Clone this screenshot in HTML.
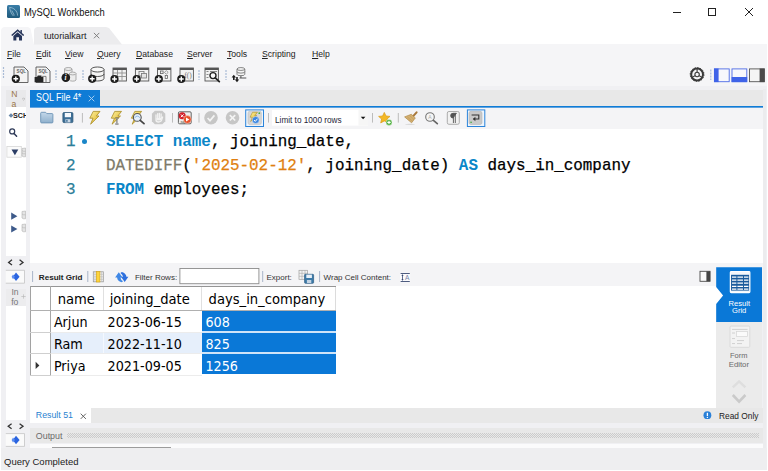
<!DOCTYPE html>
<html>
<head>
<meta charset="utf-8">
<title>MySQL Workbench</title>
<style>
html,body{margin:0;padding:0;}
body{width:768px;height:471px;overflow:hidden;background:#fff;position:relative;font-family:"Liberation Sans",sans-serif;color:#222;}
.a{position:absolute;}
.t{position:absolute;white-space:nowrap;line-height:1;transform-origin:0 0;}
u{text-decoration:underline;text-underline-offset:1px;text-decoration-thickness:1px;}
.code{font-family:"Liberation Mono","DejaVu Sans Mono",monospace;font-size:15.9px;color:#000;-webkit-text-stroke:0.25px currentColor;}
.code .kw{-webkit-text-stroke:0;}
.kw{color:#0a86c8;font-weight:bold;}
.fn{color:#7d7a6a;}
.st{color:#e07f10;}
.ln{color:#2d7e99;}
.grid{font-family:"DejaVu Sans Condensed","DejaVu Sans","Liberation Sans",sans-serif;font-size:14.2px;color:#000;}
.gh{font-size:14.6px;}
.m{font-size:9.2px;color:#222;top:49.5px;transform:scaleX(.94);}
.sep{position:absolute;width:1px;background:#b8bcc8;}
.dsep{position:absolute;width:1px;height:10px;background:repeating-linear-gradient(#b9c8dc 0 1px,transparent 1px 2px);}
.tb{font-size:8px;color:#333;top:274.3px;}
</style>
</head>
<body>
<!-- window chrome background -->
<div class="a" style="left:1px;top:44px;width:766px;height:42px;background:#f5f5f7;"></div>
<div class="a" style="left:1px;top:86px;width:766px;height:362px;background:#f0f0f3;"></div>
<div class="a" style="left:30px;top:108px;width:732.5px;height:21px;background:#f4f4f6;"></div>
<div class="a" style="left:30px;top:263px;width:732.5px;height:23px;background:#f4f4f6;"></div>
<div class="a" style="left:762.5px;top:89px;width:3.5px;height:359px;background:#ececee;"></div>
<div class="a" style="left:1px;top:448px;width:766px;height:21.5px;background:#eeeef0;"></div>

<!-- title bar -->
<svg class="a" style="left:7px;top:5px" width="13" height="13" viewBox="0 0 13 13"><defs><linearGradient id="lg" x1="0" y1="0" x2="0" y2="1"><stop offset="0" stop-color="#3a7ea8"/><stop offset="1" stop-color="#1f5a7c"/></linearGradient></defs><rect width="13" height="13" rx="1.5" fill="url(#lg)"/><path d="M2.6 2.4 C6.5 2.6 10.4 5.5 10.6 10.6 M2.6 2.4 C3 6 4.6 9 6.4 11 M4.8 5.6 C5.6 7 6.4 8.6 7.4 10.4" stroke="#c4dcea" stroke-width="0.7" fill="none" opacity=".85"/></svg>
<div class="t" style="left:24px;top:7.8px;font-size:10.2px;color:#111;transform:scaleX(.92);">MySQL Workbench</div>
<div class="a" style="left:673px;top:12px;width:8px;height:1px;background:#222;"></div>
<div class="a" style="left:708px;top:8px;width:6px;height:6px;border:1px solid #222;"></div>
<svg class="a" style="left:744px;top:7px" width="10" height="10" viewBox="0 0 10 10"><path d="M1 1 L9 9 M9 1 L1 9" stroke="#222" stroke-width="1" fill="none"/></svg>

<!-- tab row -->
<div class="a" style="left:1px;top:27px;width:33px;height:18px;background:#f5f5f7;clip-path:polygon(0 3px,1px 1px,3px 0,27px 0,29.5px 1.5px,33px 18px,0 18px);"></div>
<div class="a" style="left:34px;top:27px;width:88px;height:17.6px;background:#ececee;clip-path:polygon(0 3px,1px 1px,3px 0,72px 0,75px 1px,88px 17.6px,0 17.6px);"></div>
<svg class="a" style="left:11px;top:28.8px" width="13.4" height="12" viewBox="0 0 13 12" preserveAspectRatio="none"><path d="M6.5 0.3 L0.2 6 L1.2 7 L6.5 2.2 L11.8 7 L12.8 6 L10.6 4 L10.6 1 L9.2 1 L9.2 2.7 Z" fill="#26355a"/><path d="M2.3 7 L6.5 3.3 L10.7 7 L10.7 11.6 L7.8 11.6 L7.8 8.2 L5.2 8.2 L5.2 11.6 L2.3 11.6 Z" fill="#26355a"/></svg>
<div class="t" style="left:44px;top:31.7px;font-size:9.1px;color:#222;">tutorialkart</div>
<svg class="a" style="left:93.3px;top:32.4px" width="7.2" height="7.2" viewBox="0 0 8 8"><path d="M1 1 L7 7 M7 1 L1 7" stroke="#777" stroke-width="1" fill="none"/></svg>

<!-- menu row -->
<div class="t m" style="left:7px;"><u>F</u>ile</div>
<div class="t m" style="left:36px;"><u>E</u>dit</div>
<div class="t m" style="left:65px;"><u>V</u>iew</div>
<div class="t m" style="left:97px;"><u>Q</u>uery</div>
<div class="t m" style="left:136px;"><u>D</u>atabase</div>
<div class="t m" style="left:187px;"><u>S</u>erver</div>
<div class="t m" style="left:227px;"><u>T</u>ools</div>
<div class="t m" style="left:262px;"><u>S</u>cripting</div>
<div class="t m" style="left:312px;"><u>H</u>elp</div>

<!-- main toolbar -->
<svg class="a" style="left:0;top:60px" width="768" height="28" viewBox="0 60 768 28">
<defs>
<g id="plus"><circle r="4.1" fill="#1c1c1c"/><path d="M-2.4 0H2.4M0 -2.4V2.4" stroke="#fff" stroke-width="1.4"/></g>
<g id="tblframe"><rect x="0" y="0" width="13.4" height="13" fill="#f2f2f2" stroke="#555" stroke-width="0.9"/><rect x="0" y="0" width="13.4" height="2" fill="#555"/></g>
</defs>
<path d="M3.5 67 V78" stroke="#a9bbd6" stroke-width="1.2" stroke-dasharray="2 1"/>
<!-- new sql -->
<path d="M14 67 H24 L28 71 V82.5 H14 Z" fill="#f3f3f3" stroke="#555" stroke-width="0.9"/>
<text x="16.6" y="72.6" font-family="Liberation Sans, sans-serif" font-size="4.6" font-weight="bold" fill="#666">SQL</text>
<use href="#plus" x="15.8" y="78.8"/>
<!-- open sql -->
<path d="M36 67 H46 L50 71 V82.5 H36 Z" fill="#f3f3f3" stroke="#555" stroke-width="0.9"/>
<text x="38.4" y="72.6" font-family="Liberation Sans, sans-serif" font-size="4.6" font-weight="bold" fill="#666">SQL</text>
<path d="M34.6 77 H37 L37.8 75.4 H41.4 V77 H43.4 V82.2 H34.6 Z" fill="#262626"/>
<path d="M41.4 76.4 H46 V82.4" fill="none" stroke="#666" stroke-width="0.8"/>
<!-- sep -->
<path d="M56 70 V80" stroke="#a9bbd6" stroke-width="1.2" stroke-dasharray="2 1"/>
<!-- info db -->
<g fill="#ececec" stroke="#9a9a9a" stroke-width="0.8">
<path d="M64.5 69 V77 A3.8 1.5 0 0 0 72 77 V69 Z"/><ellipse cx="68.25" cy="69" rx="3.75" ry="1.5"/>
<path d="M69.5 73.5 V80 A3.3 1.4 0 0 0 76 80 V73.5 Z"/><ellipse cx="72.75" cy="73.5" rx="3.25" ry="1.4"/>
</g>
<circle cx="65.8" cy="77.6" r="4.3" fill="#1c1c1c"/>
<text x="64.5" y="80.4" font-family="Liberation Serif, serif" font-size="7.5" font-weight="bold" font-style="italic" fill="#fff">i</text>
<path d="M83 70 V80" stroke="#a9bbd6" stroke-width="1.2" stroke-dasharray="2 1"/>
<!-- new schema -->
<path d="M91 69.5 V78.5 A6.5 2.5 0 0 0 104 78.5 V69.5" fill="#f3f3f3" stroke="#444" stroke-width="0.9"/>
<ellipse cx="97.5" cy="69.5" rx="6.5" ry="2.5" fill="#f8f8f8" stroke="#444" stroke-width="0.9"/>
<path d="M91 74 A6.5 2.5 0 0 0 104 74" fill="none" stroke="#444" stroke-width="0.9"/>
<use href="#plus" x="92.2" y="78.8"/>
<!-- new table -->
<use href="#tblframe" x="113" y="68"/>
<path d="M117.5 70 V80.5 M122 70 V80.5 M113 73 H126.4 M113 76.5 H126.4" stroke="#909090" stroke-width="0.9" fill="none"/>
<use href="#plus" x="114.5" y="79"/>
<!-- new view -->
<use href="#tblframe" x="135.4" y="68"/>
<rect x="139" y="71.5" width="5" height="4.5" fill="none" stroke="#777" stroke-width="0.8"/>
<rect x="141.5" y="73.5" width="5" height="4.5" fill="#e4e4e4" stroke="#777" stroke-width="0.8"/>
<use href="#plus" x="136.7" y="79"/>
<!-- new routine -->
<use href="#tblframe" x="157.5" y="68"/>
<rect x="160.5" y="71" width="2.6" height="2.6" fill="none" stroke="#666" stroke-width="0.8"/>
<path d="M166.3 70.6 L168.2 72.4 L166.3 74.2 L164.4 72.4 Z" fill="none" stroke="#777" stroke-width="0.7"/>
<rect x="165.2" y="75.5" width="2.4" height="3" fill="none" stroke="#666" stroke-width="0.8"/>
<use href="#plus" x="158.8" y="79"/>
<!-- new function -->
<use href="#tblframe" x="180" y="68"/>
<text x="184.3" y="78.2" font-family="Liberation Serif, serif" font-size="7.5" fill="#777">f()</text>
<use href="#plus" x="181.3" y="79"/>
<path d="M199 70 V80" stroke="#a9bbd6" stroke-width="1.2" stroke-dasharray="2 1"/>
<!-- search table -->
<use href="#tblframe" x="205" y="68"/>
<path d="M206.5 71.5 H208.5 M206.5 74.5 H208.5 M206.5 77.5 H208.5 M210 71.5 H217" stroke="#888" stroke-width="1"/>
<circle cx="213" cy="75.6" r="3" fill="#fafafa" stroke="#222" stroke-width="1.4"/>
<path d="M215.3 77.9 L219.3 81.6" stroke="#222" stroke-width="1.8" stroke-linecap="round"/>
<path d="M226 70 V80" stroke="#a9bbd6" stroke-width="1.2" stroke-dasharray="2 1"/>
<!-- reconnect -->
<path d="M237 69 V74.3 A3.9 1.4 0 0 0 244.8 74.3 V69" fill="#f5f5f5" stroke="#666" stroke-width="0.8"/>
<ellipse cx="240.9" cy="69" rx="3.9" ry="1.4" fill="#fafafa" stroke="#666" stroke-width="0.8"/>
<path d="M237 71.7 A3.9 1.4 0 0 0 244.8 71.7" fill="none" stroke="#666" stroke-width="0.8"/>
<path d="M239.5 78 H246.3" stroke="#444" stroke-width="0.9"/>
<path d="M240.9 75.7 V78" stroke="#444" stroke-width="0.9"/>
<path d="M233.8 74.8 L236 77.5 H234.6 V80 H233 V77.5 H231.6 Z M237 82.3 L234.8 79.6 H236.2 V77.1 H237.8 V79.6 H239.2 Z" fill="#1c1c1c"/>
<!-- gear -->
<circle cx="697.1" cy="74.5" r="5.9" fill="none" stroke="#3a3a3a" stroke-width="2"/>
<circle cx="697.1" cy="74.5" r="6.9" fill="none" stroke="#3a3a3a" stroke-width="1" stroke-dasharray="1.4 1.3"/>
<circle cx="697.1" cy="74.5" r="2.2" fill="none" stroke="#3a3a3a" stroke-width="1.1"/>
<path d="M697.1 72.3 V69 M695.2 75.6 L692.3 77.3 M699 75.6 L701.9 77.3" stroke="#3a3a3a" stroke-width="1.1"/>
<path d="M710.8 69.6 V80" stroke="#a9bbd6" stroke-width="1.2" stroke-dasharray="2 1"/>
<!-- panel toggles -->
<rect x="714.4" y="68.9" width="14.8" height="12.8" fill="#f8f8fc" stroke="#4c6ae6" stroke-width="0.9"/>
<rect x="714" y="68.5" width="4.6" height="13.6" fill="#3f63e8"/>
<rect x="732" y="68.9" width="14.8" height="12.8" fill="#f8f8fc" stroke="#4c6ae6" stroke-width="0.9"/>
<rect x="731.6" y="77" width="15.6" height="5.1" fill="#3f63e8"/>
<rect x="749.5" y="68.9" width="14.8" height="12.8" fill="#f4f4f4" stroke="#555" stroke-width="0.9"/>
<rect x="759.6" y="68.5" width="5.1" height="13.6" fill="#4a4a4a"/>
</svg>


<!-- left sidebar -->
<div class="a" style="left:6px;top:90px;width:19.5px;height:17px;background:#e9e9eb;"></div>
<div class="a" style="left:6px;top:107px;width:19.5px;height:149px;background:#fff;"></div>
<div class="a" style="left:6px;top:90px;width:19.5px;height:17.4px;overflow:hidden;">
<div class="t" style="left:5.3px;top:0.2px;font-size:8.6px;color:#9a7648;">N</div>
<div class="t" style="left:5.6px;top:10.4px;font-size:8.6px;color:#9a7648;">a</div>
</div>
<svg class="a" style="left:0;top:88px" width="30" height="360" viewBox="0 88 30 360">
<path d="M23.6 97.8 L24.8 99 L23.6 100.2 L22.4 99 Z" fill="none" stroke="#aaa" stroke-width="0.6"/>
<path d="M8.6 115.5 L11 113.2 L13.4 115.5 L11 117.8 Z" fill="#6a88a8"/>
<circle cx="12.2" cy="131.4" r="2.5" fill="none" stroke="#2e3a58" stroke-width="1.2"/>
<path d="M14 133.4 L16.6 136.2" stroke="#2e3a58" stroke-width="1.5" stroke-linecap="round"/>
<rect x="6.9" y="146.4" width="14.4" height="10.8" fill="#fbfbfb" stroke="#d6d6d6" stroke-width="0.8"/>
<path d="M11.5 149.6 H18.3 L14.9 155.2 Z" fill="#2c3e66"/>
<g fill="#e4e4e4" stroke="#b4b4b4" stroke-width="0.6">
<path d="M22 148.5 V156 A3 1.2 0 0 0 25.5 156.8 V148 Z"/>
<path d="M22 150.5 A3 1.2 0 0 0 25.5 151.3 M22 153 A3 1.2 0 0 0 25.5 153.8" fill="none"/>
<path d="M22 211.5 V218 A3 1.2 0 0 0 25.5 218.8 V211 Z"/>
<path d="M22 214 A3 1.2 0 0 0 25.5 214.8" fill="none"/>
<path d="M22 224.5 V231 A3 1.2 0 0 0 25.5 231.8 V224 Z"/>
<path d="M22 227 A3 1.2 0 0 0 25.5 227.8" fill="none"/>
</g>
<path d="M11.2 212.6 L17.4 216.2 L11.2 219.8 Z M11.2 225.4 L17.4 229 L11.2 232.6 Z" fill="#3d5a8a"/>
<!-- nav arrows and button 1 -->
<path d="M12 259.8 L8.6 262.4 L12 265 M19.6 259.8 L23 262.4 L19.6 265" stroke="#333" stroke-width="1.3" fill="none"/>
<path d="M5.8 270.3 H24.5 V283.2 H5.8" fill="#fafafa" stroke="#c4c4c4" stroke-width="0.8"/>
<path d="M16 272.6 L19.6 276.8 L16 281 L12.8 276.8 Z" fill="#2a64e0"/>
<path d="M13 274.4 L15 276.8 L13 279.2 L11.6 276.8 Z" fill="#5a8cf0"/>
<!-- nav arrows and button 2 -->
<path d="M11.6 423.8 L8.2 426.3 L11.6 428.8 M19.6 423.8 L23 426.3 L19.6 428.8" stroke="#333" stroke-width="1.3" fill="none"/>
<path d="M5.8 433.6 H24.5 V446.4 H5.8" fill="#fafafa" stroke="#c4c4c4" stroke-width="0.8"/>
<path d="M16 435.8 L19.6 440 L16 444.2 L12.8 440 Z" fill="#2a64e0"/>
<path d="M13 437.6 L15 440 L13 442.4 L11.6 440 Z" fill="#5a8cf0"/>
</svg>
<div class="a" style="left:6px;top:110px;width:19.5px;height:12px;overflow:hidden;"><div class="t" style="left:6.8px;top:2.4px;font-size:7.8px;font-weight:bold;color:#222;transform:scaleX(.92);">SCHEMAS</div></div>
<!-- info -->
<div class="a" style="left:6px;top:289px;width:19.5px;height:16.6px;background:#ececee;"></div>
<div class="a" style="left:6px;top:305.6px;width:19.5px;height:114.4px;background:#fff;"></div>
<div class="t" style="left:11.4px;top:288.2px;font-size:8.6px;color:#777;">In</div>
<div class="t" style="left:11.2px;top:298.2px;font-size:8.6px;color:#777;">fo</div>
<svg class="a" style="left:21px;top:294px" width="5" height="5" viewBox="0 0 5 5"><path d="M2.5 0.3 V4.7 M0.3 2.5 H4.7" stroke="#b4b4b4" stroke-width="0.6"/></svg>

<!-- SQL tab row -->
<div class="a" style="left:30px;top:90.4px;width:732.5px;height:15.6px;background:#e8e8e8;"></div>
<div class="a" style="left:30px;top:90.4px;width:70px;height:15.6px;background:#0f7cd6;"></div>
<div class="a" style="left:30px;top:106px;width:732.5px;height:1px;background:#0f7cd6;"></div>
<div class="a" style="left:30px;top:107px;width:732.5px;height:1px;background:#5fa3e0;"></div>
<div class="t" style="left:36px;top:92.8px;font-size:10.1px;color:#fff;transform:scaleX(.885);">SQL File 4*</div>
<svg class="a" style="left:88px;top:95px" width="7" height="7" viewBox="0 0 7 7"><path d="M0.7 0.7 L6.3 6.3 M6.3 0.7 L0.7 6.3" stroke="#a4cdf0" stroke-width="1" fill="none"/></svg>

<!-- editor toolbar -->
<svg class="a" style="left:0;top:107px" width="768" height="23" viewBox="0 107 768 23">
<defs>
<linearGradient id="gy" x1="0" y1="0" x2="1" y2="1"><stop offset="0" stop-color="#fff4a0"/><stop offset="1" stop-color="#d9a91a"/></linearGradient>
<linearGradient id="gf" x1="0" y1="0" x2="0" y2="1"><stop offset="0" stop-color="#c4d8ea"/><stop offset="1" stop-color="#8fb0cc"/></linearGradient>
<path id="bolt" d="M4.2 0.4 L11 0.4 L7.4 5 L10 5 L1.6 13.2 L4 7.2 L0.8 7.2 Z" fill="url(#gy)" stroke="#a88c22" stroke-width="0.8" stroke-linejoin="round"/>
</defs>
<!-- folder -->
<path d="M40.7 113.2 Q40.7 112.3 41.6 112.3 H45.6 L46.8 113.6 H52 Q52.9 113.6 52.9 114.5 V122 Q52.9 122.9 52 122.9 H41.6 Q40.7 122.9 40.7 122 Z" fill="url(#gf)" stroke="#6c93b5" stroke-width="0.9"/>
<!-- save -->
<rect x="62.9" y="112.6" width="10" height="10" rx="1" fill="#3c6e96" stroke="#2d5878" stroke-width="0.8"/>
<rect x="64.8" y="113" width="6.2" height="4.2" fill="#f4f8fc"/>
<rect x="65.4" y="119.2" width="5" height="3.2" fill="#c9d8e6"/>
<rect x="66.2" y="119.8" width="1.4" height="2" fill="#3c6e96"/>
<path d="M82.4 113 V122.6" stroke="#bcbcbc" stroke-width="1"/>
<!-- bolts -->
<use href="#bolt" x="89" y="111"/>
<use href="#bolt" x="110.5" y="111"/>
<path d="M115.3 118 H118.5 M116.9 118 V124 M115.3 124 H118.5" stroke="#222" stroke-width="0.9" fill="none"/>
<path d="M115.6 118.2 H118.2 M116.9 118 V124 M115.6 123.8 H118.2" stroke="#fff" stroke-width="0.4" fill="none"/>
<use href="#bolt" x="130.6" y="111"/>
<circle cx="137.3" cy="117.4" r="3.9" fill="#e6f0fa" stroke="#555" stroke-width="1.1"/>
<path d="M135 117.8 A2.4 2.4 0 0 1 139.6 117.8" fill="none" stroke="#7fb0e0" stroke-width="0.9"/>
<path d="M140.2 120.4 L144 123.6" stroke="#444" stroke-width="1.8" stroke-linecap="round"/>
<!-- stop -->
<path d="M154.9 110.7 H162.3 L165.3 113.8 V121.2 L162.3 124.3 H154.9 L151.9 121.2 V113.8 Z" fill="#c9c9c9"/>
<path d="M156 119 V115 M157.7 118 V113.6 M159.4 118 V113.3 M161.1 118 V114 M156 117.5 V120 Q156 122 158.6 122 Q161.4 122 161.8 119.5 L162.6 117" stroke="#f2f2f2" stroke-width="1.3" fill="none" stroke-linecap="round"/>
<path d="M156.4 118 H161.4 V120.4 H156.4 Z" fill="#f2f2f2"/>
<path d="M172.5 113 V122.6" stroke="#bcbcbc" stroke-width="1"/>
<!-- stop on error -->
<rect x="178.4" y="111.8" width="12.8" height="12" rx="1.2" fill="#eeeeee" stroke="#555" stroke-width="0.9"/>
<text x="180.5" y="123" font-family="Liberation Sans, sans-serif" font-size="4" fill="#444">sql</text>
<circle cx="182.2" cy="115.8" r="3.5" fill="#d3202a"/>
<path d="M180.8 114.4 L183.6 117.2 M183.6 114.4 L180.8 117.2" stroke="#fff" stroke-width="1"/>
<circle cx="187.4" cy="119.5" r="3.9" fill="#e8502a" stroke="#f6e0d8" stroke-width="0.5"/>
<path d="M186 117.6 L189.4 119.5 L186 121.4 Z" fill="#fff"/>
<path d="M199 113 V122.6" stroke="#bcbcbc" stroke-width="1"/>
<!-- commit / rollback -->
<circle cx="211" cy="117.8" r="6.8" fill="#c6c6c6"/>
<path d="M207.6 118 L210 120.6 L214.4 115.4" stroke="#f4f4f4" stroke-width="1.7" fill="none"/>
<circle cx="232.5" cy="117.8" r="6.8" fill="#c6c6c6"/>
<path d="M229.8 115.1 L235.2 120.5 M235.2 115.1 L229.8 120.5" stroke="#f4f4f4" stroke-width="1.7" fill="none"/>
<!-- autocommit toggle -->
<rect x="245.7" y="109.9" width="17.8" height="16.6" fill="#eef5fc" stroke="#2b84da" stroke-width="1"/>
<rect x="248" y="111.2" width="13.4" height="13.4" rx="2" fill="#d6d6d6" stroke="#bdbdbd" stroke-width="0.6"/>
<g transform="translate(249.5 112) scale(.72)"><use href="#bolt"/></g>
<circle cx="259.3" cy="113.2" r="0.9" fill="#47b044"/>
<circle cx="255.7" cy="120" r="3.5" fill="#3b86e0" stroke="#dbe8f8" stroke-width="0.5"/>
<path d="M254 120 L255.3 121.4 L257.5 118.7" stroke="#fff" stroke-width="1" fill="none"/>
<path d="M268.5 113 V122.6" stroke="#bcbcbc" stroke-width="1"/>
<!-- limit dropdown -->
<rect x="272" y="110" width="96" height="15.6" fill="#fff"/>
<rect x="358.5" y="110" width="9.5" height="15.6" fill="#f6f6f6"/>
<path d="M360.8 116.8 H365.4 L363.1 119.3 Z" fill="#111"/>
<path d="M372.5 113 V122.6" stroke="#bcbcbc" stroke-width="1"/>
<!-- star -->
<path d="M384.3 112.4 L386 116 L390 116.4 L387 119 L387.9 122.9 L384.3 120.9 L380.7 122.9 L381.6 119 L378.6 116.4 L382.6 116 Z" fill="#f4b824" stroke="#d99a14" stroke-width="0.7" stroke-linejoin="round"/>
<circle cx="389" cy="122.4" r="3" fill="#4cae3c" stroke="#e8f4e4" stroke-width="0.5"/>
<path d="M387.3 122.4 H390.7 M389 120.7 V124.1" stroke="#fff" stroke-width="1.1"/>
<path d="M398.3 113 V122.6" stroke="#bcbcbc" stroke-width="1"/>
<!-- broom -->
<path d="M416.6 112.3 L413.2 116.2" stroke="#a9793c" stroke-width="2" stroke-linecap="round"/>
<path d="M411.3 114.3 L415.3 117.9 L411.6 122.8 L404.6 116.9 Z" fill="#d4b071" stroke="#b08a48" stroke-width="0.7" stroke-linejoin="round"/>
<path d="M409.6 115.6 L413.8 119.3 M407.4 117 L412.4 121.2" stroke="#b99556" stroke-width="0.5"/>
<ellipse cx="410" cy="124.3" rx="5" ry="0.6" fill="#d8d8d8"/>
<!-- magnifier -->
<circle cx="430" cy="117" r="4.3" fill="#f6f6f6" stroke="#777" stroke-width="1.1"/>
<text x="428.3" y="119" font-family="Liberation Sans, sans-serif" font-size="5" fill="#aaa">A</text>
<path d="M433.4 120.3 L437.3 123.6" stroke="#666" stroke-width="1.7" stroke-linecap="round"/>
<!-- pilcrow -->
<rect x="447.3" y="111.5" width="12" height="12.8" rx="1.6" fill="#f1f1f1" stroke="#9a9a9a" stroke-width="0.8"/>
<path d="M453.4 113.6 V123 M455.3 113.6 V123 M456.4 113.3 H453 A2.3 2.3 0 0 0 453 118 Z" stroke="#555" stroke-width="0.9" fill="#555"/>
<!-- wrap toggle -->
<rect x="467.4" y="109.9" width="17.4" height="16.6" fill="#eef5fc" stroke="#2b84da" stroke-width="1"/>
<rect x="469" y="111.3" width="13" height="13.2" rx="2" fill="#c9c9c9" stroke="#b5b5b5" stroke-width="0.6"/>
<path d="M471.6 115 H478.8 V119 H473.6" stroke="#333" stroke-width="1.1" fill="none"/>
<path d="M475.4 116.8 L472.8 119 L475.4 121.2 Z" fill="#333"/>
<rect x="470.4" y="121.7" width="1.4" height="1.2" fill="#3aa83a"/>
</svg>
<div class="t" style="left:275.2px;top:114.6px;font-size:9.8px;color:#26263a;transform:scaleX(.838);">Limit to 1000 rows</div>


<!-- editor -->
<div class="a" style="left:30px;top:129px;width:732.5px;height:134px;background:#fff;"></div>
<div class="t code ln" style="left:66px;top:134.6px;">1</div>
<div class="a" style="left:82px;top:138.5px;width:5px;height:5px;border-radius:2.5px;background:#1a86c8;"></div>
<div class="t code" style="left:106px;top:134.6px;"><span class="kw">SELECT</span> <span class="kw">name</span>, joining_date,</div>
<div class="t code ln" style="left:66px;top:158.7px;">2</div>
<div class="t code" style="left:106px;top:158.7px;"><span class="fn">DATEDIFF</span>(<span class="st">'2025-02-12'</span>, joining_date) <span class="kw">AS</span> days_in_company</div>
<div class="t code ln" style="left:66px;top:182.8px;">3</div>
<div class="t code" style="left:106px;top:182.8px;"><span class="kw">FROM</span> employees;</div>

<!-- result toolbar -->
<svg class="a" style="left:0;top:263px" width="768" height="24" viewBox="0 263 768 24">
<path d="M32.6 271 V282" stroke="#a8b4c8" stroke-width="1"/>
<path d="M87.8 271 V282" stroke="#a8b4c8" stroke-width="1"/>
<!-- grid icon -->
<rect x="93.3" y="271.8" width="10" height="10" fill="#f4f4f4" stroke="#9a9a9a" stroke-width="0.8"/>
<path d="M93.3 274.3 H103.3 M93.3 276.8 H103.3 M93.3 279.3 H103.3 M95 271.8 V281.8 M101.6 271.8 V281.8" stroke="#b8b8b8" stroke-width="0.6"/>
<rect x="96.4" y="271.6" width="3.5" height="10.4" fill="#fdd43c" stroke="#d8a81c" stroke-width="0.7"/>
<!-- refresh -->
<path d="M118.8 272.3 L122.5 277.4 L120.5 277.4 Q120.7 280 123.1 281.3 L121.6 282.3 Q117.3 281 117.1 277.4 L115.1 277.4 Z" fill="#3f88e6"/>
<path d="M124.7 281.9 L121 276.8 L123 276.8 Q122.8 274.2 120.4 272.9 L121.9 271.9 Q126.2 273.2 126.4 276.8 L128.4 276.8 Z" fill="#2e70de"/>
<!-- filter input -->
<rect x="179.9" y="268.5" width="79" height="15.2" fill="#fff" stroke="#8c8c8c" stroke-width="0.9"/>
<path d="M262.7 271 V282" stroke="#a8b4c8" stroke-width="1"/>
<!-- export icon -->
<rect x="299" y="270.3" width="8.6" height="9" fill="#f4f4f4" stroke="#a0a0a0" stroke-width="0.7"/>
<path d="M299 273.3 H307.6 M299 276.3 H307.6 M302 270.3 V279.3 M305 270.3 V279.3" stroke="#a8a8a8" stroke-width="0.6"/>
<rect x="304.6" y="274.3" width="9" height="9" rx="0.8" fill="#3c7aa8" stroke="#2c5c84" stroke-width="0.7"/>
<rect x="306.3" y="274.6" width="5.6" height="3.4" fill="#e8f0f8"/>
<rect x="306.9" y="280" width="4.4" height="3" fill="#c4d4e4"/>
<path d="M319.6 271 V282" stroke="#a8b4c8" stroke-width="1"/>
<!-- wrap icon -->
<rect x="400" y="272.6" width="10.2" height="9.8" fill="#fbfbfd"/>
<path d="M400.6 273.5 H409.8 M400.6 281.5 H409.8" stroke="#3a4a72" stroke-width="0.9"/>
<path d="M402.5 274.6 V280.4" stroke="#3a4a72" stroke-width="0.8"/>
<path d="M401.3 276 L402.5 274.4 L403.7 276 Z M401.3 279 L402.5 280.6 L403.7 279 Z" fill="#3a4a72"/>
<text x="405" y="280.2" font-family="Liberation Sans, sans-serif" font-size="6.6" fill="#7686a8">A</text>
<!-- panel toggle -->
<rect x="700" y="271.3" width="10" height="10" fill="#fafafa" stroke="#4a4a4a" stroke-width="0.9"/>
<rect x="706.4" y="271.3" width="3.8" height="10" fill="#444"/>
</svg>
<div class="t" style="left:38.8px;top:274.2px;font-size:8.1px;font-weight:bold;color:#222;">Result Grid</div>
<div class="t tb" style="left:134.9px;">Filter Rows:</div>
<div class="t tb" style="left:266.5px;">Export:</div>
<div class="t tb" style="left:323.6px;">Wrap Cell Content:</div>


<!-- result grid -->
<div class="a" style="left:30px;top:286px;width:686.2px;height:122px;background:#fff;"></div>
<div class="a" style="left:716px;top:286px;width:8px;height:20px;background:#fff;"></div>
<div class="a" style="left:30px;top:286px;width:306px;height:1px;background:#959595;"></div>
<div class="a" style="left:30px;top:286px;width:1px;height:89px;background:#a2a2a2;"></div>
<div class="a" style="left:50px;top:286px;width:1px;height:89px;background:#a6a6a6;"></div>
<div class="a" style="left:103px;top:287px;width:1px;height:23px;background:#e0e0e0;"></div>
<div class="a" style="left:201px;top:287px;width:1px;height:23px;background:#e0e0e0;"></div>
<div class="a" style="left:335.4px;top:287px;width:1px;height:23px;background:#dcdcdc;"></div>
<div class="a" style="left:30px;top:310px;width:306px;height:1px;background:#b0b0b0;"></div>
<div class="a" style="left:30px;top:332px;width:21px;height:1px;background:#cfcfcf;"></div>
<div class="a" style="left:30px;top:353.4px;width:21px;height:1px;background:#cfcfcf;"></div>
<div class="a" style="left:30px;top:375px;width:21px;height:1px;background:#cfcfcf;"></div>
<div class="a" style="left:51px;top:332px;width:151px;height:1px;background:#ececec;"></div>
<div class="a" style="left:51px;top:333px;width:151px;height:20.4px;background:#e6effb;"></div>
<div class="a" style="left:103px;top:333px;width:1px;height:20.4px;background:#f4f8fe;"></div>
<div class="a" style="left:51px;top:353.4px;width:151px;height:1px;background:#ececec;"></div>
<div class="a" style="left:51px;top:375px;width:151px;height:1px;background:#ececec;"></div>
<div class="a" style="left:202px;top:311px;width:133.5px;height:63.4px;background:#cfe4f8;"></div>
<div class="a" style="left:202px;top:311px;width:133.5px;height:20.4px;background:#0a78d7;"></div>
<div class="a" style="left:202px;top:332.8px;width:133.5px;height:19.5px;background:#0a78d7;"></div>
<div class="a" style="left:202px;top:354.4px;width:133.5px;height:20px;background:#0a78d7;"></div>
<svg class="a" style="left:35.2px;top:361.2px" width="6" height="9" viewBox="0 0 6 9"><path d="M0.6 0.8 L4.4 4.4 L0.6 8 Z" fill="#333"/></svg>
<div class="t grid gh" style="left:57.7px;top:291.7px;">name</div>
<div class="t grid gh" style="left:109.7px;top:291.7px;">joining_date</div>
<div class="t grid gh" style="left:208.6px;top:291.7px;">days_in_company</div>
<div class="t grid" style="left:53.9px;top:315.4px;">Arjun</div>
<div class="t grid" style="left:107.6px;top:315.4px;">2023-06-15</div>
<div class="t grid" style="left:205.5px;top:315.4px;color:#fff;">608</div>
<div class="t grid" style="left:53.9px;top:336.9px;">Ram</div>
<div class="t grid" style="left:107.6px;top:336.9px;">2022-11-10</div>
<div class="t grid" style="left:205.5px;top:336.9px;color:#fff;">825</div>
<div class="t grid" style="left:53.9px;top:358.5px;">Priya</div>
<div class="t grid" style="left:107.6px;top:358.5px;">2021-09-05</div>
<div class="t grid" style="left:205.5px;top:358.5px;color:#fff;">1256</div>

<!-- right result side panel -->
<div class="a" style="left:716.2px;top:321.4px;width:46.3px;height:86.6px;background:#ebebeb;"></div>
<div class="a" style="left:716.2px;top:267.3px;width:46.3px;height:54.6px;background:#0a78d7;clip-path:polygon(0 0,100% 0,100% 100%,0 100%,0 36.6px,6.9px 28.2px,0 19.8px);"></div>
<svg class="a" style="left:716px;top:267px" width="47" height="141" viewBox="716 267 47 141">
<rect x="730.4" y="271.7" width="19.4" height="20.8" rx="0.8" fill="#1b5c9c" stroke="#fff" stroke-width="1.3"/>
<rect x="730.6" y="272" width="19" height="2.8" fill="#f4f8fc"/>
<rect x="730.6" y="290.6" width="19" height="1.6" fill="#f4f8fc"/>
<path d="M732 277.2 H748.4 M732 280.2 H748.4 M732 283.2 H748.4 M732 286.3 H748.4 M732 289.2 H748.4" stroke="#fff" stroke-width="1.2" stroke-dasharray="4.4 1 5.6 1 4.4 20"/>
<rect x="730" y="326.1" width="19.8" height="21.2" rx="1" fill="#f3f3f3" stroke="#d8d8d8" stroke-width="0.9"/>
<rect x="736.4" y="331.6" width="11" height="5" fill="#fafafa" stroke="#d4d4d4" stroke-width="0.7"/>
<path d="M732 329.4 H747.6 M732 333 H735 M732 338.6 H735 M732 343.6 H735 M737 340.6 H744 M737 343.6 H742" stroke="#d0d0d0" stroke-width="1"/>
<path d="M732.8 387.4 L739.1 381.4 L745.4 387.4" stroke="#dedede" stroke-width="2.4" fill="none"/>
<path d="M732.8 395 L739.1 401.6 L745.4 395" stroke="#cacaca" stroke-width="2.6" fill="none"/>
</svg>
<div class="t" style="left:728.6px;top:299.8px;font-size:7.6px;color:#fff;">Result</div>
<div class="t" style="left:732px;top:307px;font-size:7.6px;color:#fff;">Grid</div>
<div class="t" style="left:730.4px;top:352px;font-size:7.8px;color:#6a6a6a;transform:scaleX(.96);">Form</div>
<div class="t" style="left:728.7px;top:360.8px;font-size:7.8px;color:#6a6a6a;">Editor</div>

<!-- result tab row -->
<div class="a" style="left:30px;top:408px;width:732.5px;height:14.5px;background:#e8e8e8;"></div>
<div class="a" style="left:30px;top:408px;width:61.3px;height:14.5px;background:#fff;"></div>
<div class="t" style="left:35.8px;top:410.8px;font-size:8.8px;color:#2a82d0;">Result 51</div>
<svg class="a" style="left:80px;top:413px" width="7" height="7" viewBox="0 0 7 7"><path d="M0.7 0.7 L5.9 5.9 M5.9 0.7 L0.7 5.9" stroke="#555" stroke-width="0.9" fill="none"/></svg>
<svg class="a" style="left:703px;top:411px" width="9" height="9" viewBox="0 0 9 9"><circle cx="4.4" cy="4.2" r="3.9" fill="#2a80d8"/><path d="M4.4 1.8 V5" stroke="#fff" stroke-width="1.3"/><circle cx="4.4" cy="6.4" r="0.7" fill="#fff"/></svg>
<div class="t" style="left:718.8px;top:411.6px;font-size:8.8px;color:#222;transform:scaleX(.95);">Read Only</div>

<!-- output panel -->
<div class="a" style="left:30px;top:427.7px;width:732.5px;height:15.8px;background:#e8e8e8;"></div>
<div class="t" style="left:35.8px;top:431.6px;font-size:8.9px;color:#6a6a6a;">Output</div>
<div class="a" style="left:66.7px;top:433px;width:692.5px;height:5.4px;background:repeating-conic-gradient(#cbcbcb 0 25%,#e9e9e9 0 50%) 0 0/2px 2px;"></div>
<div class="a" style="left:30px;top:443.5px;width:732.5px;height:4px;background:#fbfbfc;"></div>
<div class="a" style="left:52px;top:446.6px;width:119px;height:1px;background:#9c9c9c;"></div>

<!-- status -->
<div class="t" style="left:4px;top:457px;font-size:9.5px;color:#222;">Query Completed</div>
</body>
</html>
